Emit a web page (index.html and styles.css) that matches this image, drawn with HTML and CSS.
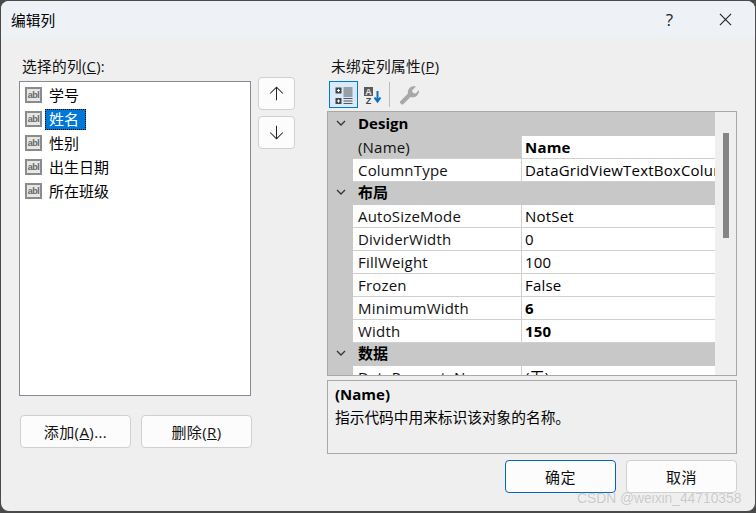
FILE: index.html
```html
<!DOCTYPE html>
<html lang="zh-CN">
<head>
    <meta charset="UTF-8" />
    <title>编辑列</title>
    <link rel="stylesheet" href="styles.css">
</head>
<body>

<div class="window">
    <!-- Title bar -->
    <div class="titlebar">
        <span class="title">编辑列</span>
        <span class="help-btn">?</span>
        <svg class="close-btn" viewBox="0 0 14 14">
            <path d="M1 1 L13 13 M13 1 L1 13"></path>
        </svg>
    </div>

    <div class="dialog">
        <div class="main">
            <!-- Column list -->
            <div class="left">
                <div class="label">选择的列(<u>C</u>):</div>
                <div class="list-row">
                    <ul class="list">
                        <li class="item"><span class="abl">abl</span><span class="item-text">学号</span></li>
                        <li class="item selected"><span class="abl">abl</span><span class="item-text">姓名</span></li>
                        <li class="item"><span class="abl">abl</span><span class="item-text">性别</span></li>
                        <li class="item"><span class="abl">abl</span><span class="item-text">出生日期</span></li>
                        <li class="item"><span class="abl">abl</span><span class="item-text">所在班级</span></li>
                    </ul>
                    <div class="move-btns">
                        <button class="btn move">
                            <svg viewBox="0 0 20 20"><path d="M10 18 V2.5 M2.5 10 L10 2.5 L17.5 10"></path></svg>
                        </button>
                        <button class="btn move">
                            <svg viewBox="0 0 20 20"><path d="M10 2 V17.5 M2.5 10 L10 17.5 L17.5 10"></path></svg>
                        </button>
                    </div>
                </div>
                <div class="list-actions">
                    <button class="btn wide">添加(<u>A</u>)...</button>
                    <button class="btn wide">删除(<u>R</u>)</button>
                </div>
            </div>

            <!-- Properties -->
            <div class="right">
                <div class="label right-label">未绑定列属性(<u>P</u>)</div>
                <div class="toolbar">
                    <span class="tool active">
                        <svg viewBox="0 0 20 20">
                            <rect class="sq" x="1.5" y="2.5" width="6" height="6"></rect>
                            <rect class="sq" x="1.5" y="13" width="6" height="6"></rect>
                            <path class="plus" d="M3 5.5 H6 M4.5 4 V7 M3 16 H6 M4.5 14.5 V17.5"></path>
                            <path class="lines" d="M9.5 3 H18.5 M9.5 5 H18.5 M9.5 7 H18.5 M9.5 9 H18.5 M9.5 11 H18.5 M9.5 13.5 H18.5 M9.5 16 H18.5 M9.5 18.5 H18.5"></path>
                        </svg>
                    </span>
                    <span class="tool">
                        <svg viewBox="0 0 20 20">
                            <rect x="0" y="2" width="9" height="9" fill="#5a5a5a"></rect>
                            <text x="4.5" y="9.5" class="az light">A</text>
                            <text x="4.5" y="19" class="az">Z</text>
                            <path class="sort" d="M13.5 6 V16 M10.5 12.5 L13.5 16.5 L16.5 12.5"></path>
                        </svg>
                    </span>
                    <span class="tool-sep"></span>
                    <span class="tool">
                        <svg viewBox="0 0 20 20">
                            <path class="wrench" d="M1 16.5 L9 8.5 C8 4 12 0 17 1.5 L13 5.5 L14 8 L16.500 8.500 L20 5 C20.500 10 16 13.500 11.500 12 L4 19.500 C3 20 0.500 18 1 16.500 Z"></path>
                        </svg>
                    </span>
                </div>

                <div class="grid-box">
                    <div class="grid-scroll">
                        <div class="group"><span class="chevron"><svg viewBox="0 0 10 6"><path d="M1 1 L5 5 L9 1"></path></svg></span><span class="group-name">Design</span></div>
                        <div class="row selected-row"><span class="prop">(Name)</span><span class="val bold">Name</span></div>
                        <div class="row"><span class="prop">ColumnType</span><span class="val">DataGridViewTextBoxColumn</span></div>

                        <div class="group"><span class="chevron"><svg viewBox="0 0 10 6"><path d="M1 1 L5 5 L9 1"></path></svg></span><span class="group-name">布局</span></div>
                        <div class="row"><span class="prop">AutoSizeMode</span><span class="val">NotSet</span></div>
                        <div class="row"><span class="prop">DividerWidth</span><span class="val">0</span></div>
                        <div class="row"><span class="prop">FillWeight</span><span class="val">100</span></div>
                        <div class="row"><span class="prop">Frozen</span><span class="val">False</span></div>
                        <div class="row"><span class="prop">MinimumWidth</span><span class="val bold">6</span></div>
                        <div class="row"><span class="prop">Width</span><span class="val bold">150</span></div>

                        <div class="group"><span class="chevron"><svg viewBox="0 0 10 6"><path d="M1 1 L5 5 L9 1"></path></svg></span><span class="group-name">数据</span></div>
                        <div class="row"><span class="prop">DataPropertyName</span><span class="val">(无)</span></div>
                    </div>
                    <div class="scrollbar"><div class="thumb"></div></div>
                </div>

                <div class="help-box">
                    <div class="help-title">(Name)</div>
                    <div class="help-text">指示代码中用来标识该对象的名称。</div>
                </div>
            </div>
        </div>

        <div class="footer">
            <button class="btn wide primary">确定</button>
            <button class="btn wide">取消</button>
        </div>
    </div>
</div>

<div class="watermark">CSDN @weixin_44710358</div>

</body>
</html>
```

FILE: styles.css
```css
body, html {
    margin: 0;
    padding: 0;
    width: 100%;
    height: 100%;
    overflow: hidden;
    background-color: #4a4a4a;
    color: #000;
    font-family: 'Open Sans', 'Noto Sans CJK SC', sans-serif;
    font-size: 15px;
}

.window {
    box-sizing: border-box;
    width: 754px;
    height: 510px;
    margin: 1px 1px 0 1px;
    border-radius: 8px;
    overflow: hidden;
    background-color: #efefef;
    display: flex;
    flex-direction: column;
}

/* Title bar */
.titlebar {
    height: 36px;
    flex: none;
    background-color: #eef2f7;
    display: flex;
    align-items: center;
    padding: 0 23px 0 10px;
}

.title {
    flex: 1;
    font-size: 14.7px;
}

.help-btn {
    font-size: 17px;
    margin-right: 46px;
    color: #222;
}

.close-btn {
    width: 13px;
    height: 13px;
    stroke: #222;
    stroke-width: 1.2;
    fill: none;
}

/* Dialog body */
.dialog {
    flex: 1;
    padding: 20px 18px 0 18px;
    display: flex;
    flex-direction: column;
}

.main {
    display: flex;
    gap: 32px;
}

.label {
    height: 24px;
    line-height: 18px;
    font-size: 14.7px;
    letter-spacing: 0.3px;
    color: #111;
    padding-left: 3px;
}

.right-label {
    padding-left: 4px;
}

.left {
    width: 276px;
    flex: none;
}

.list-row {
    display: flex;
    gap: 7px;
    align-items: flex-start;
}

.list {
    box-sizing: border-box;
    width: 232px;
    height: 315px;
    margin: 0;
    padding: 1px 0 0 0;
    list-style: none;
    background-color: #fff;
    border: 1px solid #8a8a94;
}

.item {
    height: 24px;
    display: flex;
    align-items: center;
    padding-left: 5px;
}

.abl {
    box-sizing: border-box;
    width: 17px;
    height: 16px;
    border: 2px solid #8c8c8c;
    background-color: #e6e6e6;
    font-family: 'Liberation Sans', sans-serif;
    font-size: 9px;
    font-weight: bold;
    line-height: 12px;
    text-align: center;
    letter-spacing: -0.5px;
    color: #666;
    overflow: hidden;
}

.item-text {
    margin-left: 3px;
    padding: 0 7px 0 4px;
    height: 21px;
    line-height: 21px;
    font-size: 15px;
}

.item.selected .item-text {
    background-color: #0078d7;
    color: #fff;
    outline: 1px dotted #000;
    outline-offset: -1px;
}

.move-btns {
    display: flex;
    flex-direction: column;
    gap: 6px;
    margin-top: -4px;
}

.btn {
    box-sizing: border-box;
    background-color: #fcfcfc;
    border: 1px solid #d0d0d0;
    border-radius: 4px;
    padding: 0;
    font-family: inherit;
    font-size: 15px;
    letter-spacing: 0.4px;
    color: #111;
}

.move {
    width: 37px;
    height: 33px;
    display: flex;
    align-items: center;
    justify-content: center;
}

.move svg {
    width: 17px;
    height: 17px;
    stroke: #222;
    stroke-width: 1.2;
    fill: none;
}

.list-actions {
    display: flex;
    gap: 10px;
    margin: 19px 0 0 1px;
}

.wide {
    width: 111px;
    height: 33px;
}

/* Property panel */
.right {
    width: 410px;
    flex: none;
}

.toolbar {
    height: 27px;
    display: flex;
    align-items: center;
    margin-bottom: 3px;
    padding-left: 2px;
    gap: 1px;
}

.tool {
    box-sizing: border-box;
    width: 29px;
    height: 27px;
    display: flex;
    align-items: center;
    justify-content: center;
    border: 1px solid transparent;
}

.tool.active {
    background-color: #d9ebfa;
    border-color: #0078d7;
}

.tool svg {
    width: 20px;
    height: 20px;
}

.tool .sq {
    fill: #444;
}

.tool .plus {
    stroke: #fff;
    stroke-width: 1;
    fill: none;
}

.tool .lines {
    stroke: #555;
    stroke-width: 1;
    fill: none;
}

.az {
    font-family: 'Liberation Sans', sans-serif;
    font-size: 9px;
    font-weight: bold;
    text-anchor: middle;
    fill: #444;
}

.az.light {
    fill: #e8e8e8;
}

.tool .sort {
    stroke: #0a6fc9;
    stroke-width: 2;
    fill: none;
}

.tool .wrench {
    fill: #a8a8a8;
}

.tool-sep {
    width: 1px;
    height: 25px;
    background-color: #bcbcbc;
    margin: 0 3px 0 0;
}

.grid-box {
    box-sizing: border-box;
    height: 265px;
    border: 1px solid #a8a8a8;
    display: flex;
    overflow: hidden;
}

.grid-scroll {
    width: 387px;
    flex: none;
    background-color: #c8c8c8;
    padding-top: 1px;
}

.group {
    box-sizing: border-box;
    height: 23px;
    padding-bottom: 4px;
    display: flex;
    align-items: center;
    font-weight: bold;
}

.chevron {
    width: 25px;
    display: flex;
    justify-content: center;
}

.chevron svg {
    width: 10px;
    height: 6px;
    stroke: #333;
    stroke-width: 1.3;
    fill: none;
}

.group-name {
    margin-left: 5px;
}

.row {
    box-sizing: border-box;
    height: 23px;
    margin-left: 25px;
    display: flex;
    background-color: #fff;
    border-bottom: 1px solid #d0d0d0;
    line-height: 22px;
    letter-spacing: 0.2px;
}

.row.selected-row {
    background-color: #c8c8c8;
}

.prop {
    box-sizing: border-box;
    width: 169px;
    flex: none;
    padding-left: 5px;
    border-right: 1px solid #d0d0d0;
    color: #111;
    overflow: hidden;
}

.val {
    flex: 1;
    padding-left: 3px;
    background-color: #fff;
    white-space: nowrap;
    overflow: hidden;
}

.bold {
    font-weight: bold;
}

.scrollbar {
    flex: 1;
    background-color: #efefef;
}

.thumb {
    width: 6px;
    height: 105px;
    margin: 21px 0 0 8px;
    background-color: #858585;
}

.help-box {
    box-sizing: border-box;
    height: 74px;
    margin-top: 4px;
    border: 1px solid #a8a8a8;
    padding: 2px 7px;
    line-height: 23px;
}

.help-title {
    font-weight: bold;
}

.help-text {
    font-size: 14.7px;
}

/* Bottom buttons */
.footer {
    display: flex;
    justify-content: flex-end;
    gap: 10px;
    margin-top: 6px;
}

.primary {
    border: 1px solid #0067c0;
}

.watermark {
    position: absolute;
    left: 577px;
    top: 491px;
    font-family: 'Liberation Sans', sans-serif;
    font-size: 13.8px;
    color: #c9c9c9;
    text-shadow: 0 0 1px #fff;
}
```
